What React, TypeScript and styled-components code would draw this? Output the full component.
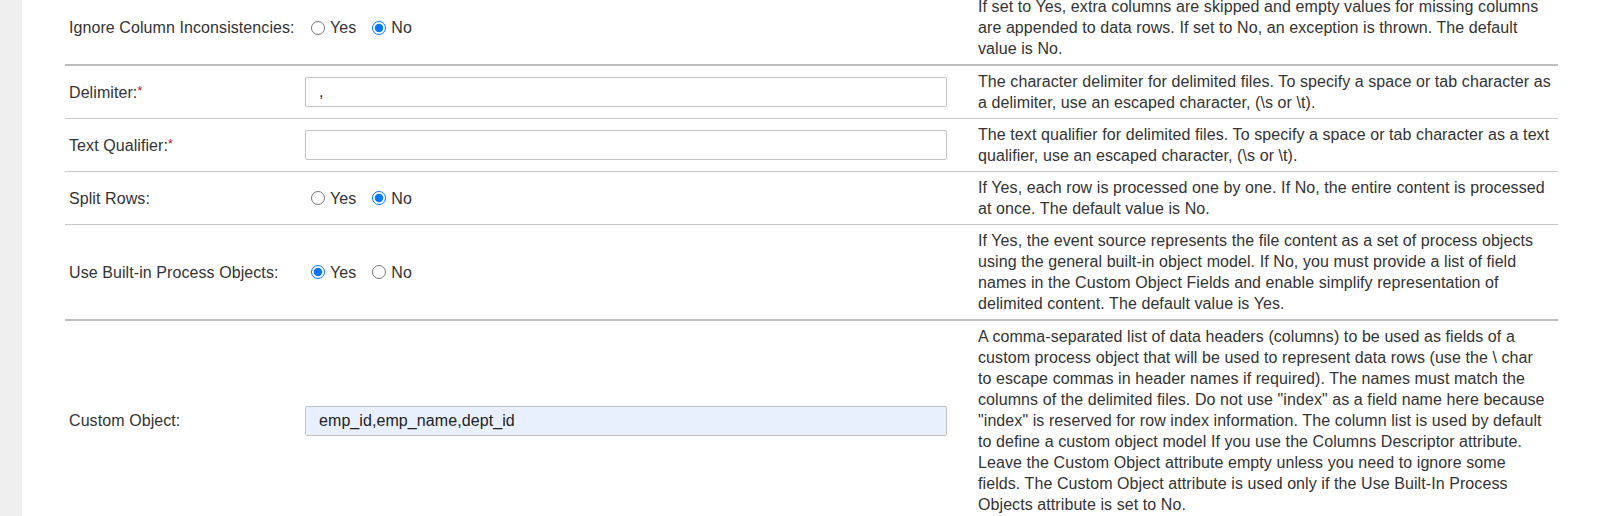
import React from 'react';
import styled, { createGlobalStyle } from 'styled-components';

type Field = {
  id: string;
  label: string;
  required?: boolean;
  kind: 'radio' | 'text';
  value: string;
  autofill?: boolean;
  // description is kept as the lines shown in the help column
  description: string[];
  separator?: boolean;
};

const FIELDS: Field[] = [
  {
    id: 'ignoreColumns',
    label: 'Ignore Column Inconsistencies:',
    kind: 'radio',
    value: 'No',
    separator: true,
    description: [
      'If set to Yes, extra columns are skipped and empty values for missing columns',
      'are appended to data rows. If set to No, an exception is thrown. The default',
      'value is No.',
    ],
  },
  {
    id: 'delimiter',
    label: 'Delimiter:',
    required: true,
    kind: 'text',
    value: ',',
    description: [
      'The character delimiter for delimited files. To specify a space or tab character as',
      'a delimiter, use an escaped character, (\\s or \\t).',
    ],
  },
  {
    id: 'textQualifier',
    label: 'Text Qualifier:',
    required: true,
    kind: 'text',
    value: '',
    description: [
      'The text qualifier for delimited files. To specify a space or tab character as a text',
      'qualifier, use an escaped character, (\\s or \\t).',
    ],
  },
  {
    id: 'splitRows',
    label: 'Split Rows:',
    kind: 'radio',
    value: 'No',
    description: [
      'If Yes, each row is processed one by one. If No, the entire content is processed',
      'at once. The default value is No.',
    ],
  },
  {
    id: 'builtIn',
    label: 'Use Built-in Process Objects:',
    kind: 'radio',
    value: 'Yes',
    separator: true,
    description: [
      'If Yes, the event source represents the file content as a set of process objects',
      'using the general built-in object model. If No, you must provide a list of field',
      'names in the Custom Object Fields and enable simplify representation of',
      'delimited content. The default value is Yes.',
    ],
  },
  {
    id: 'customObject',
    label: 'Custom Object:',
    kind: 'text',
    value: 'emp_id,emp_name,dept_id',
    autofill: true,
    description: [
      'A comma-separated list of data headers (columns) to be used as fields of a',
      'custom process object that will be used to represent data rows (use the \\ char',
      'to escape commas in header names if required). The names must match the',
      'columns of the delimited files. Do not use "index" as a field name here because',
      '"index" is reserved for row index information. The column list is used by default',
      'to define a custom object model If you use the Columns Descriptor attribute.',
      'Leave the Custom Object attribute empty unless you need to ignore some',
      'fields. The Custom Object attribute is used only if the Use Built-In Process',
      'Objects attribute is set to No.',
    ],
  },
];

const GlobalStyle = createGlobalStyle`
  html, body {
    margin: 0;
    padding: 0;
    background: #fff;
  }
  body {
    font-family: 'Liberation Sans', Arial, sans-serif;
    color: #333;
    letter-spacing: 0.08px;
  }
`;

const Page = styled.div`
  display: flex;
  height: 516px;
  overflow: hidden;
`;

const Gutter = styled.div`
  flex: 0 0 22px;
  background: #efefef;
`;

const Content = styled.div`
  flex: 1;
  padding: 0 52px 0 43px;
  overflow: hidden;
`;

// page is scrolled a little, first row is cut at the top
const Form = styled.div`
  margin-top: -9px;
`;

const Row = styled.div<{ $separator?: boolean }>`
  display: grid;
  grid-template-columns: 240px 668px 1fr;
  border-bottom: ${({ $separator }) => ($separator ? '2px solid #bdbdbd' : '1px solid #c8c8c8')};
`;

const LabelCell = styled.div`
  display: flex;
  align-items: center;
  padding: 5px 4px;
  font-size: 16px;
  line-height: 21px;
  color: #333;
`;

const RequiredWrap = styled.span`
  display: inline-flex;
  align-items: center;
`;

const Required = styled.span`
  color: #c00;
  font-size: 12px;
  line-height: 1;
  align-self: flex-start;
  margin-top: 3px;
`;

const ControlCell = styled.div`
  display: flex;
  align-items: center;
`;

const DescriptionCell = styled.div`
  padding: 5px 2px 5px 5px;
  font-size: 16px;
  line-height: 21px;
  color: #333;
`;

const DescriptionLine = styled.span`
  display: block;
  white-space: nowrap;
`;

const TextInput = styled.input<{ $autofill?: boolean }>`
  box-sizing: border-box;
  width: 642px;
  height: 30px;
  margin: 0;
  padding: 0 13px;
  border: 1px solid #c2c2c2;
  border-radius: 2px;
  background: ${({ $autofill }) => ($autofill ? '#e8f0fe' : '#fff')};
  font-family: 'Liberation Sans', Arial, sans-serif;
  font-size: 16px;
  letter-spacing: 0.08px;
  color: #222;
  outline: none;
`;

const RadioGroup = styled.div`
  display: flex;
  align-items: center;
  gap: 16px;
  padding-left: 6px;
`;

const RadioOption = styled.label`
  display: inline-flex;
  align-items: center;
  font-size: 16px;
  line-height: 21px;
  color: #333;
`;

const RadioInput = styled.input.attrs({ type: 'radio' })`
  width: 14px;
  height: 14px;
  margin: 0 5px 0 0;
  accent-color: #0075ff;
`;

const FieldControl: React.FC<{ field: Field }> = ({ field }) => {
  if (field.kind === 'text') {
    return <TextInput name={field.id} defaultValue={field.value} $autofill={field.autofill} />;
  }

  return (
    <RadioGroup>
      {['Yes', 'No'].map((option) => (
        <RadioOption key={option}>
          <RadioInput name={field.id} value={option} defaultChecked={field.value === option} />
          {option}
        </RadioOption>
      ))}
    </RadioGroup>
  );
};

export default function App() {
  return (
    <>
      <GlobalStyle />
      <Page>
        <Gutter />
        <Content>
          <Form>
            {FIELDS.map((field) => (
              <Row key={field.id} $separator={field.separator}>
                <LabelCell>
                  {field.required ? (
                    <RequiredWrap>
                      {field.label}
                      <Required>*</Required>
                    </RequiredWrap>
                  ) : (
                    field.label
                  )}
                </LabelCell>
                <ControlCell>
                  <FieldControl field={field} />
                </ControlCell>
                <DescriptionCell>
                  {field.description.map((line, idx) => (
                    <DescriptionLine key={`${field.id}-${idx}`}>{line}</DescriptionLine>
                  ))}
                </DescriptionCell>
              </Row>
            ))}
          </Form>
        </Content>
      </Page>
    </>
  );
}
